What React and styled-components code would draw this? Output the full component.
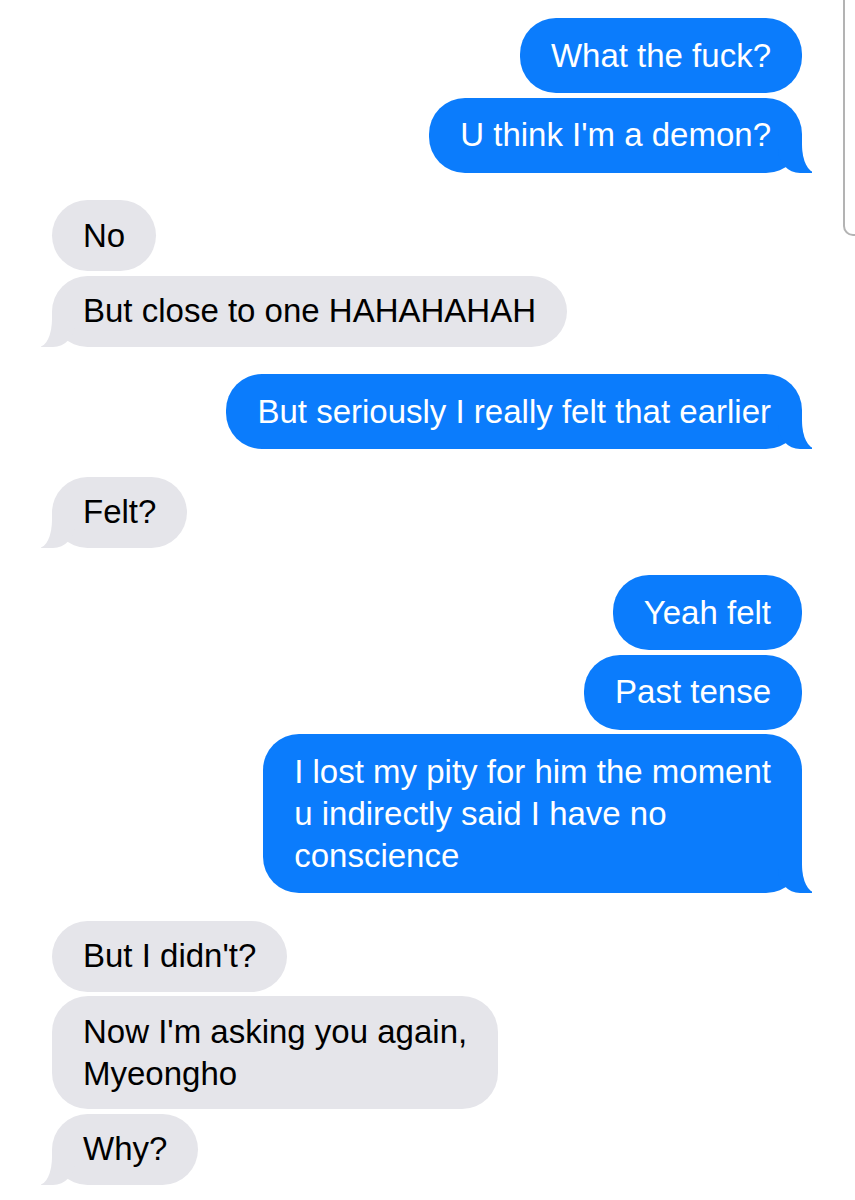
import React from "react"
import styled, { createGlobalStyle, css } from "styled-components"

const BLUE = "#0b7cfc"
const GRAY = "#e5e5ea"

const GlobalStyle = createGlobalStyle`
  html, body {
    margin: 0;
    padding: 0;
    background: #fff;
  }
  body {
    font-family: "Liberation Sans", Arial, sans-serif;
    -webkit-font-smoothing: antialiased;
  }
`

const thread = [
  { from: "me", lines: [["What the fuck?"], ["U think I'm a demon?"]] },
  { from: "them", lines: [["No"], ["But close to one HAHAHAHAH"]] },
  { from: "me", lines: [["But seriously I really felt that earlier"]] },
  { from: "them", lines: [["Felt?"]] },
  {
    from: "me",
    lines: [
      ["Yeah felt"],
      ["Past tense"],
      [
        "I lost my pity for him the moment",
        "u indirectly said I have no",
        "conscience",
      ],
    ],
  },
  {
    from: "them",
    lines: [
      ["But I didn't?"],
      ["Now I'm asking you again,", "Myeongho"],
      ["Why?"],
    ],
  },
]

const App = () => {
  return (
    <>
      <GlobalStyle />
      <Screen>
        <Thread>
          {thread.map((group, gIdx) => (
            <Group key={gIdx} $from={group.from}>
              {group.lines.map((msg, idx) => (
                <Bubble
                  key={idx}
                  $from={group.from}
                  $tail={idx === group.lines.length - 1}
                >
                  {msg.map((line, lIdx) => (
                    <React.Fragment key={lIdx}>
                      {lIdx > 0 && <br />}
                      {line}
                    </React.Fragment>
                  ))}
                </Bubble>
              ))}
            </Group>
          ))}
        </Thread>
        <ScrollHint />
      </Screen>
    </>
  )
}

const Screen = styled.div`
  position: relative;
  width: 855px;
  min-height: 1200px;
  background: #fff;
  overflow: hidden;
`

const Thread = styled.div`
  display: flex;
  flex-direction: column;
  gap: 27.5px;
  padding: 18px 53px 0 52px;
`

const Group = styled.div`
  display: flex;
  flex-direction: column;
  gap: 4.5px;
  align-items: ${p => (p.$from === "me" ? "flex-end" : "flex-start")};
`

const meTail = css`
  &::before {
    right: -10px;
    width: 34px;
    background: ${BLUE};
    border-bottom-left-radius: 22px 24px;
  }
  &::after {
    right: -24px;
    width: 24px;
    border-bottom-left-radius: 14px 28px;
  }
`

const themTail = css`
  &::before {
    left: -11px;
    width: 34px;
    background: ${GRAY};
    border-bottom-right-radius: 22px 24px;
  }
  &::after {
    left: -24px;
    width: 24px;
    border-bottom-right-radius: 13px 28px;
  }
`

const Bubble = styled.div`
  position: relative;
  isolation: isolate;
  max-width: 580px;
  border-radius: 36px;
  font-size: 33px;
  line-height: 42px;
  padding: ${p => (p.$from === "me" ? "16.5px 31px" : "14.5px 31px")};
  background: ${p => (p.$from === "me" ? BLUE : GRAY)};
  color: ${p => (p.$from === "me" ? "#fff" : "#000")};

  &::before,
  &::after {
    content: "";
    position: absolute;
    bottom: 0;
    height: 36px;
    z-index: -1;
    display: ${p => (p.$tail ? "block" : "none")};
  }
  &::after {
    background: #fff;
  }

  ${p => (p.$from === "me" ? meTail : themTail)}
`

// faint scroll indicator sitting over the top right corner
const ScrollHint = styled.div`
  position: absolute;
  top: -4px;
  right: -10px;
  width: 20px;
  height: 238px;
  border-left: 2px solid #b3b3b3;
  border-bottom: 2px solid #b3b3b3;
  border-bottom-left-radius: 10px;
`

export default App
